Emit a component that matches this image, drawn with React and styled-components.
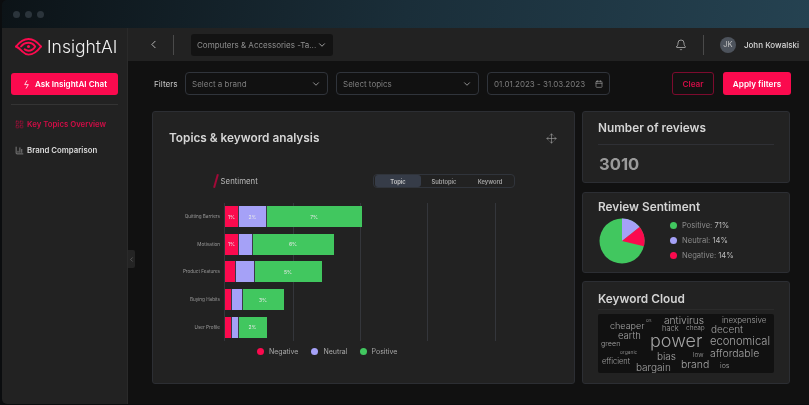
import React from "react";
import styled, { createGlobalStyle } from "styled-components";
import { ChevronLeft, ChevronDown, Bell, Calendar, Move, LayoutGrid, ChartColumn } from "lucide-react";

const Global = createGlobalStyle`
  html, body { margin: 0; padding: 0; background: #0b0d0f; }
  body { width: 809px; height: 405px; overflow: hidden; font-family: Inter, "Liberation Sans", sans-serif; }
  * { box-sizing: border-box; }
`;
const RED = "#fb0a4e";
const PURPLE = "#a5a1f7";
const GREEN = "#41c75f";

const Frame = styled.div`
  margin-left: 2px; width: 807px; height: 404px; display: flex; flex-direction: column;
  background: #111111; border-radius: 5px 0 0 5px; overflow: hidden; position: relative;
  filter: blur(0.35px);
`;
const TitleBar = styled.div`
  height: 28px; flex: none; display: flex; align-items: center; gap: 5px; padding-left: 11px;
  background: linear-gradient(100deg, #0c1317 0%, #1a2e39 50%, #254251 100%);
`;
const Dot = styled.span`width: 7px; height: 7px; border-radius: 50%; background: #2b343b;`;
const Body = styled.div`flex: 1; display: flex; min-height: 0;`;
const Sidebar = styled.aside`
  width: 126px; flex: none; background: #222222; border-right: 1px solid #2a2a2a;
  display: flex; flex-direction: column; padding: 0 9px; position: relative;
`;
const Logo = styled.div`height: 33px; display: flex; align-items: center; gap: 5px; padding-left: 4px; margin-top: 2px;`;
const LogoText = styled.span`font-size: 17.5px; font-weight: 300; color: #f0f0f0;`;
const AskButton = styled.button`
  margin-top: 10px; height: 22px; border: 0; border-radius: 3px; background: ${RED}; color: #fff;
  font: 600 8.1px Inter, sans-serif; display: flex; align-items: center; justify-content: center; gap: 6px;
  padding: 0 0 0 2px;
`;
const SideRule = styled.div`height: 1px; background: #343434; margin-top: 9px;`;
const NavItem = styled.div`
  display: flex; align-items: center; gap: 3px; padding-left: 4px; height: 12px; font-size: 7.8px; font-weight: 600;
  color: ${p => (p.$active ? "#d20d47" : "#dcdcdc")}; margin-top: ${p => p.$mt}px;
`;
const Handle = styled.div`
  position: absolute; left: 126px; top: 222px; width: 7px; height: 18px; background: #242424;
  border-radius: 0 2px 2px 0; display: flex; align-items: center; justify-content: center; color: #777;
`;
const Main = styled.main`flex: 1; min-width: 0; display: flex; flex-direction: column;`;
const TopBar = styled.header`
  height: 33px; flex: none; background: #222222; display: flex; align-items: center; padding-left: 19px;
  color: #d5d5d5;
`;
const VRule = styled.span`width: 1px; height: 20px; background: #4a4a4a; flex: none; margin-left: ${p => p.$ml || 0}px;`;
const CategorySelect = styled.div`
  margin-left: 17px; width: 142px; height: 22px; background: #131313; border-radius: 3px; display: flex;
  align-items: center; justify-content: space-between; padding: 0 6px; font-size: 8px; color: #8f8f8f; white-space: nowrap;
`;
const TopRight = styled.div`margin-left: auto; display: flex; align-items: center; padding-right: 10px;`;
const BellIcon = styled(Bell)`margin-right: 16px;`;
const Avatar = styled.span`
  width: 16px; height: 16px; border-radius: 50%; background: #4d535c; color: #c2c2c2; font-size: 7.5px;
  display: flex; align-items: center; justify-content: center; margin: 0 8px 0 16px;
`;
const UserName = styled.span`font-size: 8px; font-weight: 500; color: #d8d8d8;`;
const FilterRow = styled.div`display: flex; align-items: center; margin-top: 11px; height: 23px; padding-left: 26px;`;
const FilterLabel = styled.span`font-size: 8.2px; color: #c6c6c6; width: 31px;`;
const Select = styled.div`
  width: ${p => p.$w}px; height: 23px; margin-right: 8px; border: 1px solid #30343b; border-radius: 4px; display: flex;
  align-items: center; justify-content: space-between; padding: 0 6px; font-size: 8px; color: #7e7e7e;
`;
const ClearButton = styled.button`
  margin-left: auto; width: 42px; height: 23px; background: transparent; border: 1px solid #7c0b2e; border-radius: 3px;
  color: #d20d47; font: 600 8.2px Inter, sans-serif; padding: 0;
`;
const ApplyButton = styled.button`
  margin: 0 18px 0 9px; width: 68px; height: 23px; background: ${RED}; border: 0; border-radius: 3px; color: #fff;
  font: 600 8.2px Inter, sans-serif; padding: 0;
`;
const Content = styled.div`display: flex; gap: 7px; margin-top: 16px; padding-left: 24px;`;
const Card = styled.section`
  background: #222222; border: 1px solid #2c2e33; border-radius: 3px;
`;
const ChartCard = styled(Card)`width: 423px; height: 273px; padding: 17px 16px 0 16px; display: flex; flex-direction: column;`;
const ChartHead = styled.div`display: flex; align-items: center; justify-content: space-between; height: 18px; padding-right: 1px; color: #a8a8a8;`;
const ChartTitle = styled.h2`margin: 0; font-size: 11.8px; font-weight: 600; color: #d6d6d6;`;
const ControlRow = styled.div`display: flex; align-items: center; justify-content: space-between; margin-top: 27px; height: 14px; padding: 0 43px 0 46px;`;
const SentimentLabel = styled.div`display: flex; align-items: center; gap: 4px; font-size: 7.8px; color: #b9b9b9;`;
const Slash = styled.span`width: 1.6px; height: 14px; background: #a20a38; transform: rotate(16deg);`;
const Tabs = styled.div`display: flex; width: 142px; height: 14px; border: 1px solid #30343b; border-radius: 4px; padding: 0 1px;`;
const Tab = styled.span`
  flex: 1; font-size: 5.8px; font-weight: 600; color: ${p => (p.$active ? "#c8c8c8" : "#a2a2a2")};
  background: ${p => (p.$active ? "#363c48" : "transparent")}; border-radius: 3px;
  display: flex; align-items: center; justify-content: center;
`;
const Plot = styled.div`position: relative; margin: 15px 0 0 0; height: 138px; padding-top: 3px; display: flex; flex-direction: column; gap: 6.7px;`;
const GridLine = styled.i`position: absolute; top: 0; bottom: 0; width: 1px; background: #34363b; left: ${p => p.$x}px;`;
const BarRow = styled.div`display: flex; align-items: center; height: 21px; position: relative;`;
const BarLabel = styled.span`width: 51px; text-align: right; font-size: 4.6px; color: #9b9b9b; margin-right: 5px; white-space: nowrap;`;
const Seg = styled.span`
  height: 21px; background: ${p => p.$c}; color: #e8e8e8; font-size: 5px; display: flex; align-items: center; justify-content: center;
  border-right: 1px solid ${p => (p.$last ? "transparent" : "#3a3a48")};
`;
const Legend = styled.div`display: flex; margin-top: 4px; padding-left: 88px; height: 12px; align-items: center;`;
const LegendItem = styled.span`display: flex; align-items: center; gap: 5px; font-size: 7px; color: #a8a8a8; margin-right: ${p => p.$mr}px;`;
const LegendDot = styled.i`width: 7px; height: 7px; border-radius: 50%; background: ${p => p.$c}; display: block; flex: none;`;
const SideColumn = styled.div`width: 208px; display: flex; flex-direction: column; gap: 8.5px;`;
const ReviewsCard = styled(Card)`height: 72px; padding: 9px 15px 0;`;
const SideTitle = styled.h3`margin: 0; font-size: 11.8px; font-weight: 600; color: #d4d4d4; line-height: 15px;`;
const Rule = styled.div`height: 1px; background: #2f3035; margin: 8px 0 0; `;
const BigNumber = styled.div`font-size: 16.6px; font-weight: 700; color: #9a9a9a; margin-top: 9px; padding-left: 1px;`;
const SentimentCard = styled(Card)`height: 81px; padding: 7px 15px 0;`;
const SentimentBody = styled.div`display: flex; margin-top: 3px; padding-left: 1px; gap: 25px;`;
const SentimentList = styled.div`display: flex; flex-direction: column; gap: 4.200px; padding-top: 2.500px;`;
const SentimentItem = styled.div`display: flex; align-items: center; gap: 5px; height: 11px; font-size: 7.6px; color: #8a8a8a; white-space: pre; b { font-weight: 400; color: #bdbdbd; }`;
const CloudCard = styled(Card)`height: 103px; padding: 10px 15px 0;`;
const CloudRule = styled(Rule)`margin-top: 2px; background: #2a2a2a;`;
const Cloud = styled.div`position: relative; height: 59px; margin-top: 4px; background: #111111; border-radius: 2px; overflow: hidden;`;
const Word = styled.span`
  position: absolute; transform: translateY(-50%); white-space: nowrap; line-height: 1; color: #a3a3a3; font-weight: 300;
  left: ${p => p.$x}px; top: ${p => p.$y}px; font-size: ${p => p.$s}px;
`;
const Spark = styled.svg`flex: none;`;

const bars = [
  ["Quitting Barriers", 14, 28, 95, "1%", "2%", "7%"],
  ["Motivation", 14, 14, 81, "1%", "", "6%"],
  ["Product Features", 11, 19, 67, "", "", "5%"],
  ["Buying Habits", 7, 11, 41, "", "", "3%"],
  ["User Profile", 7, 7, 28, "", "", "2%"],
];
const words = [
  ["cheaper", 12, 11, 9], ["os", 48, 6, 5], ["antivirus", 66, 5.500, 10.200], ["inexpensive", 124, 5.500, 8],
  ["hack", 64, 14.500, 7.500], ["cheap", 88, 14, 6.500], ["decent", 113, 15, 10], ["earth", 20, 22, 9.500],
  ["power", 52, 27, 18], ["economical", 112, 28, 11.200], ["green", 3, 30, 7.200], ["organic", 22, 38, 5],
  ["bias", 59, 42, 10], ["low", 95, 41, 6.500], ["affordable", 112, 40, 10.500], ["efficient", 4, 48, 7.500],
  ["bargain", 38, 53, 10], ["brand", 83, 51, 10.500], ["ios", 122, 51, 7],
];

const LogoMark = () => (
  <svg width="27" height="18" viewBox="0 0 27 18" fill="none" stroke={RED} strokeWidth="1.900" strokeLinecap="round" strokeLinejoin="round">
    <path d="M1 8.500C5 3.500 9 1 13.500 1S22 3.500 26 8.500" />
    <path d="M1 8.500c3 1.200 4.500 3.200 6.500 5.200 1.900 1.900 3.900 2.900 6 2.900 4.500 0 8.500-2.700 12.500-8.100" />
    <path d="M6 8.500C8 5.800 10.500 4.700 13.500 4.700c2.800 0 5 1.300 6.700 3.800-1.500 2.700-3.800 4.200-6.700 4.200-1.600 0-2.900-.5-3.900-1.400" />
    <circle cx="13.500" cy="8.500" r="1.500" fill={RED} stroke="none" />
  </svg>
);

const Pie = () => (
  <svg width="46" height="46" viewBox="-23 -23 46 46">
    <circle r="22.500" fill={GREEN} />
    <path d="M0 0L0-22.500A22.500 22.500 0 0 1 17.600-14Z" fill={PURPLE} />
    <path d="M0 0L17.600-14A22.500 22.500 0 0 1 21.900 5.300Z" fill={RED} />
  </svg>
);

export default function App() {
  return (
    <>
      <Global />
      <Frame>
        <TitleBar><Dot /><Dot /><Dot /></TitleBar>
        <Body>
          <Sidebar>
            <Logo><LogoMark /><LogoText>InsightAI</LogoText></Logo>
            <AskButton>
              <Spark width="5" height="9" viewBox="0 0 5 9" fill="none" stroke="#fff" strokeWidth=".8" strokeLinejoin="round">
                <path d="M3 .5L.7 4.600h3.600L2 8.500" />
              </Spark>
              Ask InsightAI Chat
            </AskButton>
            <SideRule />
            <NavItem $active $mt={13}><LayoutGrid size={9} strokeWidth={1.300} />Key Topics Overview</NavItem>
            <NavItem $mt={14}><ChartColumn size={9} strokeWidth={1.300} />Brand Comparison</NavItem>
            <Handle><ChevronLeft size={7} /></Handle>
          </Sidebar>
          <Main>
            <TopBar>
              <ChevronLeft size={13} strokeWidth={1.500} />
              <VRule $ml={13} />
              <CategorySelect>Computers &amp; Accessories -Ta...<ChevronDown size={10} color="#bbb" /></CategorySelect>
              <TopRight>
                <BellIcon size={12} strokeWidth={1.300} />
                <VRule />
                <Avatar>JK</Avatar>
                <UserName>John Kowalski</UserName>
              </TopRight>
            </TopBar>
            <FilterRow>
              <FilterLabel>Filters</FilterLabel>
              <Select $w={143}>Select a brand<ChevronDown size={10} color="#aaa" /></Select>
              <Select $w={143}>Select topics<ChevronDown size={10} color="#aaa" /></Select>
              <Select $w={123}>01.01.2023 - 31.03.2023<Calendar size={8} color="#999" /></Select>
              <ClearButton>Clear</ClearButton>
              <ApplyButton>Apply filters</ApplyButton>
            </FilterRow>
            <Content>
              <ChartCard>
                <ChartHead><ChartTitle>Topics &amp; keyword analysis</ChartTitle><Move size={11} strokeWidth={1.300} /></ChartHead>
                <ControlRow>
                  <SentimentLabel><Slash />Sentiment</SentimentLabel>
                  <Tabs><Tab $active>Topic</Tab><Tab>Subtopic</Tab><Tab>Keyword</Tab></Tabs>
                </ControlRow>
                <Plot>
                  {[55, 124, 191, 258, 326].map(x => <GridLine key={x} $x={x} />)}
                  {bars.map(([label, a, b, c, ta, tb, tc]) => (
                    <BarRow key={label}>
                      <BarLabel>{label}</BarLabel>
                      <Seg $c={RED} style={{ width: a }}>{ta}</Seg>
                      <Seg $c={PURPLE} style={{ width: b }}>{tb}</Seg>
                      <Seg $c={GREEN} $last style={{ width: c }}>{tc}</Seg>
                    </BarRow>
                  ))}
                </Plot>
                <Legend>
                  <LegendItem $mr={13}><LegendDot $c={RED} />Negative</LegendItem>
                  <LegendItem $mr={12}><LegendDot $c={PURPLE} />Neutral</LegendItem>
                  <LegendItem><LegendDot $c={GREEN} />Positive</LegendItem>
                </Legend>
              </ChartCard>
              <SideColumn>
                <ReviewsCard>
                  <SideTitle>Number of reviews</SideTitle>
                  <Rule />
                  <BigNumber>3010</BigNumber>
                </ReviewsCard>
                <SentimentCard>
                  <SideTitle>Review Sentiment</SideTitle>
                  <SentimentBody>
                    <Pie />
                    <SentimentList>
                      <SentimentItem><LegendDot $c={GREEN} /><span>Positive: <b>71%</b></span></SentimentItem>
                      <SentimentItem><LegendDot $c={PURPLE} /><span>Neutral: <b>14%</b></span></SentimentItem>
                      <SentimentItem><LegendDot $c={RED} /><span>Negative: <b>14%</b></span></SentimentItem>
                    </SentimentList>
                  </SentimentBody>
                </SentimentCard>
                <CloudCard>
                  <SideTitle>Keyword Cloud</SideTitle>
                  <CloudRule />
                  <Cloud>
                    {words.map(([w, x, y, s]) => <Word key={w} $x={x} $y={y} $s={s}>{w}</Word>)}
                  </Cloud>
                </CloudCard>
              </SideColumn>
            </Content>
          </Main>
        </Body>
      </Frame>
    </>
  );
}
